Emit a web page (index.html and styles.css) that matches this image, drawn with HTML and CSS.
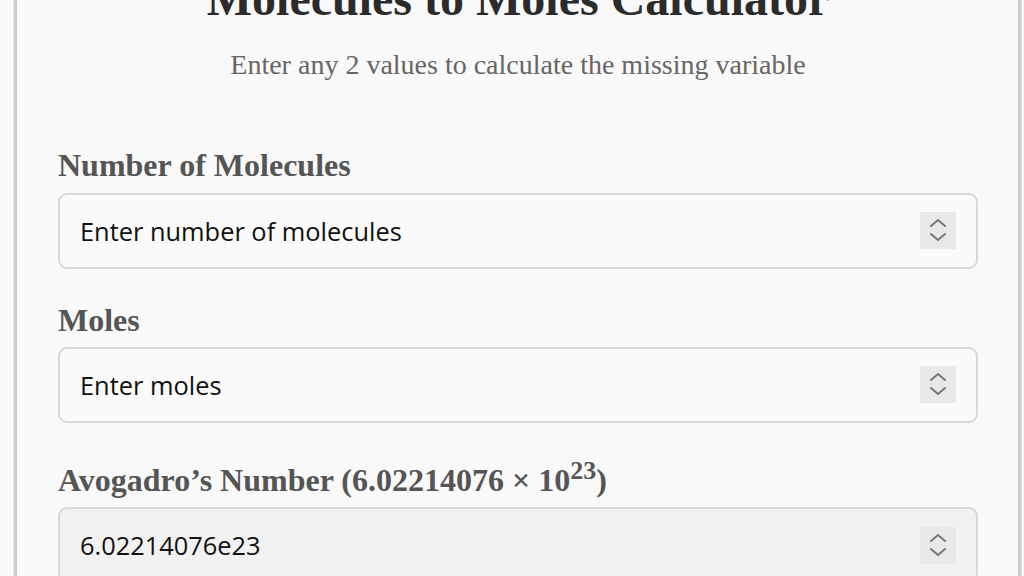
FILE: index.html
```html
<!DOCTYPE html>
<html lang="en">
<head>
    <meta charset="UTF-8">
    <meta name="viewport" content="width=device-width, initial-scale=1.0">
    <title>Molecules to Moles Calculator</title>
    <link rel="stylesheet" href="styles.css">
</head>
<body>
    <div class="calculator">
        <h1>Molecules to Moles Calculator</h1>
        <p class="subtitle">Enter any 2 values to calculate the missing variable</p>

        <div class="field-group">
            <label for="molecules">Number of Molecules</label>
            <div class="field">
                <input type="number" id="molecules" placeholder="Enter number of molecules">
                <svg class="spinner" viewBox="0 0 36 37" aria-hidden="true">
                    <polyline points="11,14 18,8 25,14" />
                    <polyline points="11,22 18,28 25,22" />
                </svg>
            </div>
        </div>

        <div class="field-group">
            <label for="moles">Moles</label>
            <div class="field">
                <input type="number" id="moles" placeholder="Enter moles">
                <svg class="spinner" viewBox="0 0 36 37" aria-hidden="true">
                    <polyline points="11,14 18,8 25,14" />
                    <polyline points="11,22 18,28 25,22" />
                </svg>
            </div>
        </div>

        <div class="field-group">
            <label for="avogadro">Avogadro&rsquo;s Number (6.02214076 &times; 10<sup>23</sup>)</label>
            <div class="field readonly">
                <input type="text" id="avogadro" value="6.02214076e23" readonly>
                <svg class="spinner" viewBox="0 0 36 37" aria-hidden="true">
                    <polyline points="11,14 18,8 25,14" />
                    <polyline points="11,22 18,28 25,22" />
                </svg>
            </div>
        </div>
    </div>
</body>
</html>
```

FILE: styles.css
```css
body {
    margin: 0;
    background-color: #fafafa;
    font-family: "Liberation Serif", "Times New Roman", serif;
}

.calculator {
    margin: -73px 3px 0 14px;
    padding: 40px 40px 40px 41px;
    background: #f9f9f9;
    border: 3px solid #cbcbcb;
    box-shadow: 0 0 0 1px #e8e8e8;
}

h1 {
    margin: 0;
    font-size: 48px;
    line-height: 1.2;
    text-align: center;
    color: #2b2b2b;
}

.subtitle {
    margin: 20px 0 65px;
    font-size: 28px;
    line-height: 1.2;
    text-align: center;
    color: #666;
}

.field-group {
    margin-bottom: 32px;
}

.field-group label {
    display: block;
    margin-bottom: 8px;
    font-size: 32px;
    font-weight: bold;
    line-height: 1.2;
    color: #555;
}

.field-group sup {
    font-size: 26px;
}

.field {
    display: flex;
    align-items: center;
    height: 72px;
    padding: 0 20px;
    background: #fafafa;
    border: 2px solid #d8d8d8;
    border-radius: 9px;
}

.field.readonly {
    background: #f1f1f1;
}

.field input {
    flex: 1;
    min-width: 0;
    padding: 0;
    border: none;
    outline: none;
    background: transparent;
    font-family: "Open Sans", sans-serif;
    font-size: 25.4px;
    color: #111;
    -moz-appearance: textfield;
}

.field input::placeholder {
    color: #111;
    opacity: 1;
}

.field input::-webkit-inner-spin-button,
.field input::-webkit-outer-spin-button {
    -webkit-appearance: none;
    margin: 0;
}

.spinner {
    width: 36px;
    height: 37px;
    background: #e8e8e8;
    fill: none;
    stroke: #777;
    stroke-width: 2;
    stroke-linecap: round;
    stroke-linejoin: round;
}
```
